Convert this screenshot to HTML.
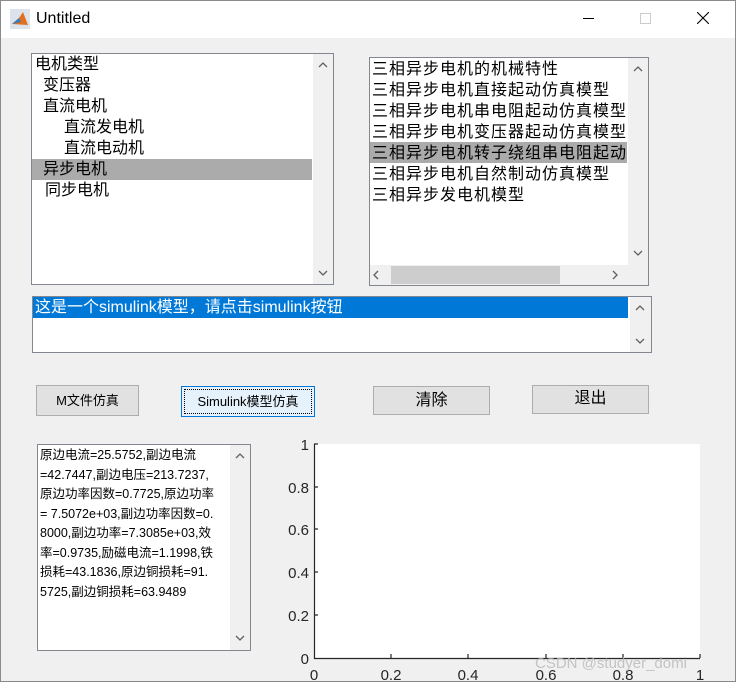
<!DOCTYPE html>
<html><head><meta charset="utf-8"><style>
*{margin:0;padding:0;box-sizing:border-box}
body{width:736px;height:682px;background:#f0f0f0;position:relative;overflow:hidden;font-family:"Liberation Sans","Noto Sans CJK SC",sans-serif;}
.abs{position:absolute}
.win{left:0;top:0;width:736px;height:682px;border:1px solid #8a8a8a}
.title{left:1px;top:1px;width:734px;height:37px;background:#fff}
.box{background:#fff;border:1px solid #828790}
.sb{background:#f0f0f0}
.cj{font-family:"Noto Sans CJK SC",sans-serif;font-size:16px;line-height:21px;white-space:nowrap;color:#000}
.btn{background:#e1e1e1;border:1px solid #adadad;font-family:"Liberation Sans","Noto Sans CJK SC",sans-serif;text-align:center;color:#000}
</style></head><body>
<div class="abs win"></div>
<div class="abs title"></div>
<svg class="abs" style="left:10px;top:9px" width="20" height="20"><rect x="0" y="0" width="20" height="20" fill="#dde3ea"/><path d="M2 15 L9 9 L13 3 L18 16 Z" fill="#e07020"/><path d="M2 15 L9 9 L11 13 Z" fill="#3a7bc0"/></svg>
<div class="abs" style="left:36px;top:10px;font-size:16px;color:#000">Untitled</div>
<div class="abs" style="left:583px;top:18px;width:11px;height:1px;background:#000"></div>
<div class="abs" style="left:640px;top:13px;width:11px;height:11px;border:1px solid #ccc"></div>
<svg class="abs" style="left:697px;top:12px" width="12" height="12"><path d="M0 0L12 12M12 0L0 12" stroke="#000" stroke-width="1.1"/></svg>

<div class="abs box" style="left:31px;top:53px;width:303px;height:232px"></div>
<div class="abs sb" style="left:313px;top:54px;width:20px;height:230px"></div>
<div class="abs" style="left:32px;top:159px;width:280px;height:21px;background:#ababab"></div>
<div class="abs cj" style="left:35px;top:52px">电机类型</div>
<div class="abs cj" style="left:43px;top:73px">变压器</div>
<div class="abs cj" style="left:43px;top:94px">直流电机</div>
<div class="abs cj" style="left:64px;top:115px">直流发电机</div>
<div class="abs cj" style="left:64px;top:136px">直流电动机</div>
<div class="abs cj" style="left:43px;top:157px">异步电机</div>
<div class="abs cj" style="left:45px;top:178px">同步电机</div>

<div class="abs box" style="left:369px;top:57px;width:280px;height:229px"></div>
<div class="abs sb" style="left:628px;top:58px;width:20px;height:207px"></div>
<div class="abs sb" style="left:370px;top:265px;width:278px;height:20px"></div>
<div class="abs" style="left:391px;top:266px;width:169px;height:18px;background:#cdcdcd"></div>
<div class="abs" style="left:370px;top:142px;width:257px;height:21px;background:#ababab"></div>
<div class="abs cj" style="left:372px;top:57px;letter-spacing:1px;width:255px;overflow:hidden">三相异步电机的机械特性<br>三相异步电机直接起动仿真模型<br>三相异步电机串电阻起动仿真模型<br>三相异步电机变压器起动仿真模型<br>三相异步电机转子绕组串电阻起动<br>三相异步电机自然制动仿真模型<br>三相异步发电机模型</div>

<div class="abs box" style="left:32px;top:296px;width:620px;height:57px"></div>
<div class="abs sb" style="left:630px;top:297px;width:21px;height:55px"></div>
<div class="abs" style="left:33px;top:297px;width:595px;height:21px;background:#0078d7"></div>
<div class="abs" style="left:35px;top:297px;font-size:16px;line-height:21px;color:#fff;font-family:'Liberation Sans','Noto Sans CJK SC',sans-serif">这是一个simulink模型，请点击simulink按钮</div>

<div class="abs btn" style="left:36px;top:385px;width:103px;height:31px;font-size:13px;line-height:29px">M文件仿真</div>
<div class="abs btn" style="left:181px;top:386px;width:134px;height:31px;font-size:13px;line-height:29px;background:#e5f1fb;border-color:#0078d7"><div style="position:absolute;left:2px;top:2px;right:2px;bottom:2px;border:1px dotted #000"></div>Simulink模型仿真</div>
<div class="abs btn" style="left:373px;top:386px;width:117px;height:29px;font-size:16px;line-height:27px">清除</div>
<div class="abs btn" style="left:532px;top:385px;width:117px;height:29px;font-size:16px;line-height:26px">退出</div>

<div class="abs box" style="left:37px;top:444px;width:214px;height:207px"></div>
<div class="abs sb" style="left:230px;top:445px;width:20px;height:205px"></div>
<div class="abs" style="left:40px;top:446px;font-size:12.5px;line-height:19.5px;color:#000;white-space:nowrap">原边电流=25.5752,副边电流<br>=42.7447,副边电压=213.7237,<br>原边功率因数=0.7725,原边功率<br>= 7.5072e+03,副边功率因数=0.<br>8000,副边功率=7.3085e+03,效<br>率=0.9735,励磁电流=1.1998,铁<br>损耗=43.1836,原边铜损耗=91.<br>5725,副边铜损耗=63.9489</div>

<div class="abs" style="left:314px;top:444px;width:386px;height:214px;background:#fff"></div>
<svg class="abs" style="left:0;top:0" width="736" height="682">
<g stroke="#606060" stroke-width="1.3" fill="none">
<path d="M319 67l4-4 4 4M319 271l4 4 4-4"/>
<path d="M634 71l4-4 4 4M634 251l4 4 4-4"/>
<path d="M378 271l-4 4 4 4M613 271l4 4-4 4"/>
<path d="M636 310l4-4 4 4M636 339l4 4 4-4"/>
<path d="M236 458l4-4 4 4M236 636l4 4 4-4"/>
</g>
<g stroke="#262626" stroke-width="1.2" fill="none">
<path d="M314.5 444V658.5H700"/>
<path d="M314 487h4M314 529h4M314 572h4M314 615h4M314 444h4"/>
<path d="M391 658v-4M468 658v-4M546 658v-4M623 658v-4M700 658v-4"/>
</g>
<g font-family="Liberation Sans" font-size="15" fill="#262626">
<g text-anchor="end"><text x="309" y="450">1</text><text x="309" y="493">0.8</text><text x="309" y="535">0.6</text><text x="309" y="578">0.4</text><text x="309" y="621">0.2</text><text x="309" y="664">0</text></g>
<g text-anchor="middle"><text x="314" y="680">0</text><text x="391" y="680">0.2</text><text x="468" y="680">0.4</text><text x="546" y="680">0.6</text><text x="623" y="680">0.8</text><text x="700" y="680">1</text></g>
</g>
<text x="535" y="668" font-family="Liberation Sans" font-size="15" fill="#b8b8b8" opacity="0.8">CSDN @studyer_domi</text>
</svg>
</body></html>
